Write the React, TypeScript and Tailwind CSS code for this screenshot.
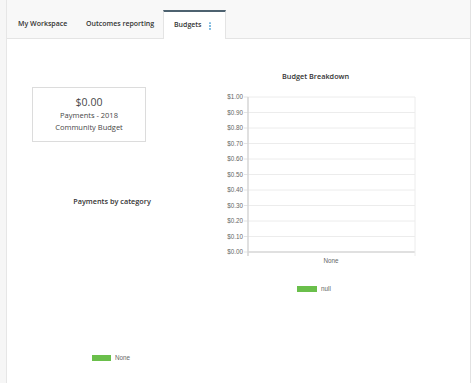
import { EllipsisVertical } from 'lucide-react'

const ticks = ['$1.00', '$0.90', '$0.80', '$0.70', '$0.60', '$0.50', '$0.40', '$0.30', '$0.20', '$0.10', '$0.00']

const chartFont = '"Liberation Sans", Arial, sans-serif'

function BudgetChart() {
  const top = 9
  const step = 15.5
  return (
    <svg width="240" height="210" viewBox="0 0 240 210" className="block">
      {ticks.map((t, i) => {
        const y = top + i * step
        const last = i === ticks.length - 1
        return (
          <g key={t}>
            <line x1="45" x2="212" y1={y} y2={y} stroke={last ? '#d6d6d6' : '#ececec'} strokeWidth={last ? 1.5 : 1} />
            <line x1="41" x2="45" y1={y} y2={y} stroke="#e4e4e4" />
            <text x="40" y={y + 2.2} textAnchor="end" fontSize="6.3" fill="#666" fontFamily={chartFont}>
              {t}
            </text>
          </g>
        )
      })}
      <line x1="45" x2="45" y1={top} y2={top + 10 * step + 4} stroke="#d6d6d6" strokeWidth="1.5" />
      <line x1="212" x2="212" y1={top} y2={top + 10 * step + 4} stroke="#ececec" />
      <text x="128" y="175" textAnchor="middle" fontSize="6.3" fill="#666" fontFamily={chartFont}>
        None
      </text>
      <rect x="94" y="198" width="20" height="6" fill="#6abf4b" />
      <text x="118" y="203.3" fontSize="6.3" fill="#666" fontFamily={chartFont}>
        null
      </text>
    </svg>
  )
}

export default function App() {
  return (
    <div className="w-[474px] h-[383px] flex bg-white overflow-hidden" style={{ fontFamily: '"Open Sans", sans-serif' }}>
      <div className="w-[7px] bg-[#f6f6f6] border-r border-[#e6e6e6]" />
      <div className="flex-1 flex flex-col border-r border-[#e2e2e2] mr-[3px]">
        <div className="h-[39px] bg-[#f8f8f8] border-b border-[#e4e4e4] flex items-end">
          <div className="w-[70px] pl-[11px] h-[28px] flex items-center text-[7px] font-semibold text-[#333]">My Workspace</div>
          <div className="w-[86px] pl-[9px] h-[28px] flex items-center text-[7px] font-semibold text-[#333]">Outcomes reporting</div>
          <div className="w-[63px] h-[29px] -mb-px bg-white border-t-2 border-t-[#4d6270] border-x border-x-[#e4e4e4] flex items-center pl-[10px] pr-[10px] text-[7px] font-semibold text-[#333]">
            Budgets
            <EllipsisVertical size={10} strokeWidth={2.5} className="ml-auto text-[#4a9fd5]" />
          </div>
        </div>
        <div className="flex-1 flex">
          <div className="w-[196px] flex flex-col">
            <div className="ml-[25px] mt-[48px] w-[114px] h-[55px] border border-[#dcdcdc] flex flex-col items-center justify-center text-[#474747]">
              <div className="text-[10.5px] leading-[13px]">$0.00</div>
              <div className="text-[7.5px] leading-[12px]">Payments - 2018</div>
              <div className="text-[7.5px] leading-[12px]">Community Budget</div>
            </div>
            <div className="mt-[54px] text-center text-[7.3px] leading-[10px] font-semibold text-[#333] pl-[14px]">Payments by category</div>
            <div className="mt-[148px] flex items-center gap-[4px] pl-[85px] text-[6.3px] leading-[8px] text-[#666]" style={{ fontFamily: chartFont }}>
              <span className="w-[19px] h-[6px] bg-[#6abf4b]" />
              None
            </div>
          </div>
          <div className="flex flex-col">
            <div className="mt-[32px] text-[7.3px] leading-[10px] font-semibold text-[#333] pl-[79px]">Budget Breakdown</div>
            <div className="mt-[7px]">
              <BudgetChart />
            </div>
          </div>
        </div>
      </div>
    </div>
  )
}
